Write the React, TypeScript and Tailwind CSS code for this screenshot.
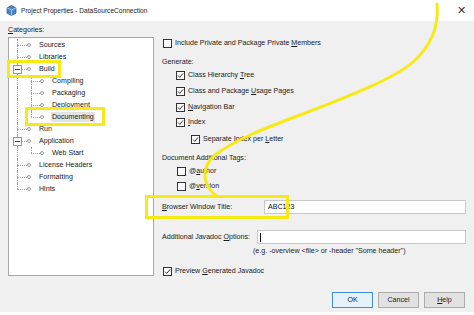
import React from "react";

const font = { fontFamily: '"Liberation Sans", Arial, sans-serif' };

function Check({ checked }: { checked?: boolean }) {
  return (
    <span className="inline-flex items-center justify-center w-[9px] h-[9px] border border-[#333] bg-white shrink-0">
      {checked && (
        <svg width="7" height="7" viewBox="0 0 7 7">
          <path d="M1 3.6 L2.8 5.4 L6 1.4" fill="none" stroke="#222" strokeWidth="0.9" />
        </svg>
      )}
    </span>
  );
}

function CheckRow({ checked, children, className = "" }: { checked?: boolean; children: React.ReactNode; className?: string }) {
  return (
    <div className={`flex items-center gap-[3px] ${className}`}>
      <Check checked={checked} />
      <span>{children}</span>
    </div>
  );
}

type Node = { label: string; level: 0 | 1; expand?: boolean; lastChild?: boolean };

const tree: Node[] = [
  { label: "Sources", level: 0 },
  { label: "Libraries", level: 0 },
  { label: "Build", level: 0, expand: true },
  { label: "Compiling", level: 1 },
  { label: "Packaging", level: 1 },
  { label: "Deployment", level: 1 },
  { label: "Documenting", level: 1, lastChild: true },
  { label: "Run", level: 0 },
  { label: "Application", level: 0, expand: true },
  { label: "Web Start", level: 1, lastChild: true },
  { label: "License Headers", level: 0 },
  { label: "Formatting", level: 0 },
  { label: "Hints", level: 0 },
];

function TreeRow({ n, i }: { n: Node; i: number }) {
  const last = i === tree.length - 1;
  const selected = n.label === "Documenting";
  return (
    <div className="relative h-[12px] flex items-center">
      {/* level 0 vertical guide */}
      <span className={`absolute left-[8px] top-0 border-l border-dotted border-[#a0a0a0] ${last ? "h-[6px]" : "h-[12px]"}`} />
      {n.level === 1 && (
        <span className={`absolute left-[22px] top-0 border-l border-dotted border-[#a0a0a0] ${n.lastChild ? "h-[6px]" : "h-[12px]"}`} />
      )}
      {n.level === 0 ? (
        <>
          <span className="absolute left-[8px] top-[6px] w-[10px] border-t border-dotted border-[#a0a0a0]" />
          {n.expand && (
            <span className="absolute left-[4px] top-[2px] w-[9px] h-[9px] border border-[#999] bg-white flex items-center justify-center">
              <span className="w-[5px] border-t border-[#444]" />
            </span>
          )}
          <span className="absolute left-[18px] top-[4px] w-[4px] h-[4px] rounded-full border border-[#9a9a9a]" />
          <span className="ml-[30px] text-[#1a1a1a]">{n.label}</span>
        </>
      ) : (
        <>
          <span className="absolute left-[22px] top-[6px] w-[9px] border-t border-dotted border-[#a0a0a0]" />
          <span className="absolute left-[31px] top-[4px] w-[4px] h-[4px] rounded-full border border-[#9a9a9a]" />
          <span className={`ml-[42px] px-[1px] text-[#1a1a1a] ${selected ? "bg-[#e3e3e3]" : ""}`}>{n.label}</span>
        </>
      )}
    </div>
  );
}

function Btn({ children, primary }: { children: React.ReactNode; primary?: boolean }) {
  return (
    <div className={`w-[41px] h-[16px] flex items-center justify-center border ${primary ? "border-[#3c8fd8] bg-[#e5f1fb]" : "border-[#adadad] bg-[#e1e1e1]"}`}>
      {children}
    </div>
  );
}

export default function App() {
  return (
    <div className="relative w-[474px] h-[315px] bg-white overflow-hidden text-[7.1px] text-[#1a1a1a]" style={font}>
      {/* title bar */}
      <div className="h-[21px] flex items-center pl-[6px] pr-[8px]">
        <svg width="11" height="11" viewBox="0 0 11 11" className="mr-[4px]">
          <path d="M5.5 0.5 L10 2.8 L10 8.2 L5.5 10.5 L1 8.2 L1 2.8 Z" fill="#4a83c4" stroke="#2c5d94" strokeWidth="0.7" />
          <path d="M1 2.8 L5.5 5 L10 2.8 M5.5 5 L5.5 10.5" fill="none" stroke="#cfe0f3" strokeWidth="0.7" />
        </svg>
        <span className="text-[6.6px] text-[#222]">Project Properties - DataSourceConnection</span>
        <span className="ml-auto text-[11px] text-[#333] leading-none">✕</span>
      </div>

      {/* body */}
      <div className="h-[291px] bg-[#f0f0f0] flex flex-col">
        <div className="flex flex-1">
          {/* left: categories */}
          <div className="w-[154px] pl-[8px] pt-[4px] flex flex-col">
            <div className="h-[11px] leading-[11px]"><u>C</u>ategories:</div>
            <div className="w-[146px] h-[239px] mt-[1px] border border-[#a9a9a9] bg-white pt-[1px]">
              {tree.map((n, i) => (
                <TreeRow key={n.label} n={n} i={i} />
              ))}
            </div>
          </div>

          {/* right: options */}
          <div className="flex-1 pl-[8px] pr-[8px] pt-[17px] flex flex-col">
            <CheckRow className="ml-[1px] h-[10px]">
              Include Private and Package Private <u>M</u>embers
            </CheckRow>
            <div className="mt-[9px] h-[10px] leading-[10px]">Generate:</div>
            <div className="ml-[14px] flex flex-col">
              <CheckRow checked className="mt-[3px] h-[10px]">Class Hierarchy <u>T</u>ree</CheckRow>
              <CheckRow checked className="mt-[6px] h-[10px]">Class and Package <u>U</u>sage Pages</CheckRow>
              <CheckRow checked className="mt-[6px] h-[10px]"><span><u>N</u>avigation Bar</span></CheckRow>
              <CheckRow checked className="mt-[5px] h-[10px]"><span><u>I</u>ndex</span></CheckRow>
              <CheckRow checked className="ml-[15px] mt-[7px] h-[10px]">Separate Index per <u>L</u>etter</CheckRow>
            </div>
            <div className="mt-[9px] h-[10px] leading-[10px]">Document Additional Tags:</div>
            <div className="ml-[15px] flex flex-col">
              <CheckRow className="mt-[3px] h-[10px]">@<u>a</u>uthor</CheckRow>
              <CheckRow className="mt-[5px] h-[10px]">@<u>v</u>ersion</CheckRow>
            </div>
            <div className="mt-[9px] flex items-center h-[14px]">
              <span className="w-[102px]"><u>B</u>rowser Window Title:</span>
              <div className="flex-1 h-[14px] bg-white border border-[#c9c9c9] flex items-center pl-[3px] text-[#111]">ABC123</div>
            </div>
            <div className="mt-[16px] flex items-center h-[14px]">
              <span className="w-[95px]">Additional Javadoc <u>O</u>ptions:</span>
              <div className="flex-1 h-[14px] bg-white border border-[#c9c9c9] flex items-center pl-[2px]">
                <span className="w-px h-[9px] bg-black" />
              </div>
            </div>
            <div className="ml-[91px] mt-[2px] h-[10px] leading-[10px] text-[#222]">
              (e.g. -overview &lt;file&gt; or -header "Some header")
            </div>
            <CheckRow checked className="ml-[1px] mt-[10px] h-[10px]">Preview <u>G</u>enerated Javadoc</CheckRow>
          </div>
        </div>

        {/* buttons */}
        <div className="h-[20px] flex justify-end items-start gap-[5px] pr-[9px]">
          <Btn primary>OK</Btn>
          <Btn>Cancel</Btn>
          <Btn><u>H</u>elp</Btn>
        </div>
      </div>
      <div className="h-[3px] bg-white" />

      {/* yellow annotations */}
      <div className="absolute left-[7px] top-[60px] w-[54px] h-[18px] border-[3px] border-[#f7ea14]" />
      <div className="absolute left-[25px] top-[107px] w-[80px] h-[19px] border-[3px] border-[#f7ea14]" />
      <div className="absolute left-[145px] top-[195px] w-[144px] h-[24px] border-[3px] border-[#f7ea14]" />
      <svg className="absolute left-0 top-0 pointer-events-none" width="474" height="315">
        <path
          d="M437 4 C439 25 432 45 413 62 C395 78 350 96 300 115 C265 128 235 140 215 155 C200 168 203 185 216 196"
          fill="none"
          stroke="#f7ea14"
          strokeWidth="3"
          strokeLinecap="round"
        />
      </svg>
    </div>
  );
}
